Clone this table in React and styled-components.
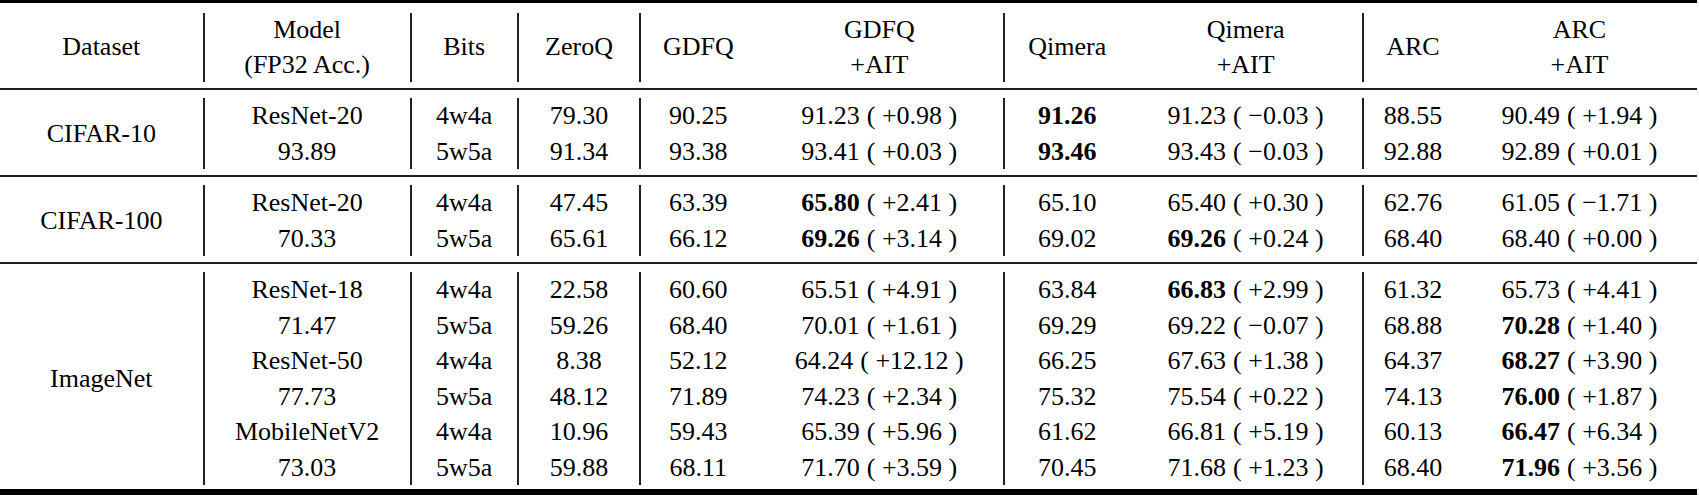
import React from "react";
import styled, { createGlobalStyle } from "styled-components";

const Global = createGlobalStyle`
  html, body { margin: 0; padding: 0; background: #fff; }
  body { font-family: "Liberation Serif", serif; color: #000; }
`;

const COLS = "202.6px 207px 107.2px 122.5px 116px 248px 126px 232.7px 100px 235px";
const LINED = new Set([1, 2, 3, 4, 6, 8]);

const Table = styled.div`
  width: 1697px;
  display: flex;
  flex-direction: column;
  font-family: "Liberation Serif", serif;
  font-size: 26px;
  color: #000;
`;

const TopRule = styled.div`
  height: 3px;
  background: #000;
  margin-bottom: 10px;
`;

const MidRule = styled.div`
  height: 2px;
  background: #1e1e1e;
  margin: 6px 0 8px;
`;

const BottomRule = styled.div`
  height: 6px;
  background: #000;
  margin-top: 4px;
`;

const Section = styled.div`
  display: grid;
  grid-template-columns: ${COLS};
  grid-auto-rows: ${(p) => p.$row}px;
`;

const Cell = styled.div`
  display: flex;
  flex-direction: column;
  align-items: center;
  justify-content: center;
  font-family: "Liberation Serif", serif;
  line-height: ${(p) => p.$lh || 35.5}px;
  white-space: nowrap;
  grid-column: ${(p) => p.$col + 1};
  grid-row: ${(p) => (p.$span ? `1 / span ${p.$span}` : "auto")};
  border-left: ${(p) => (LINED.has(p.$col) ? "2px solid #222" : "none")};
`;

const B = styled.b`
  font-weight: 700;
`;

const Delta = styled.span`
  margin-left: 7px;
`;

const header = [
  ["Dataset"],
  ["Model", "(FP32 Acc.)"],
  ["Bits"],
  ["ZeroQ"],
  ["GDFQ"],
  ["GDFQ", "+AIT"],
  ["Qimera"],
  ["Qimera", "+AIT"],
  ["ARC"],
  ["ARC", "+AIT"],
];

const sections = [
  {
    name: "CIFAR-10",
    rows: [
      ["ResNet-20", "4w4a", "79.30", "90.25", ["91.23", "+0.98"], "*91.26", ["91.23", "\u22120.03"], "88.55", ["90.49", "+1.94"]],
      ["93.89", "5w5a", "91.34", "93.38", ["93.41", "+0.03"], "*93.46", ["93.43", "\u22120.03"], "92.88", ["92.89", "+0.01"]],
    ],
  },
  {
    name: "CIFAR-100",
    rows: [
      ["ResNet-20", "4w4a", "47.45", "63.39", ["*65.80", "+2.41"], "65.10", ["65.40", "+0.30"], "62.76", ["61.05", "\u22121.71"]],
      ["70.33", "5w5a", "65.61", "66.12", ["*69.26", "+3.14"], "69.02", ["*69.26", "+0.24"], "68.40", ["68.40", "+0.00"]],
    ],
  },
  {
    name: "ImageNet",
    rows: [
      ["ResNet-18", "4w4a", "22.58", "60.60", ["65.51", "+4.91"], "63.84", ["*66.83", "+2.99"], "61.32", ["65.73", "+4.41"]],
      ["71.47", "5w5a", "59.26", "68.40", ["70.01", "+1.61"], "69.29", ["69.22", "\u22120.07"], "68.88", ["*70.28", "+1.40"]],
      ["ResNet-50", "4w4a", "8.38", "52.12", ["64.24", "+12.12"], "66.25", ["67.63", "+1.38"], "64.37", ["*68.27", "+3.90"]],
      ["77.73", "5w5a", "48.12", "71.89", ["74.23", "+2.34"], "75.32", ["75.54", "+0.22"], "74.13", ["*76.00", "+1.87"]],
      ["MobileNetV2", "4w4a", "10.96", "59.43", ["65.39", "+5.96"], "61.62", ["66.81", "+5.19"], "60.13", ["*66.47", "+6.34"]],
      ["73.03", "5w5a", "59.88", "68.11", ["71.70", "+3.59"], "70.45", ["71.68", "+1.23"], "68.40", ["*71.96", "+3.56"]],
    ],
  },
];

function Num({ v }) {
  if (v.startsWith("*")) return <B>{v.slice(1)}</B>;
  return <>{v}</>;
}

function Value({ v }) {
  if (Array.isArray(v)) {
    return (
      <span>
        <Num v={v[0]} />
        <Delta>( {v[1]} )</Delta>
      </span>
    );
  }
  return <Num v={v} />;
}

export default function App() {
  return (
    <>
      <Global />
      <Table>
        <TopRule />
        <Section $row={69}>
          {header.map((lines, i) => (
            <Cell key={i} $col={i} $lh={34.5}>
              {lines.map((l) => (
                <span key={l}>{l}</span>
              ))}
            </Cell>
          ))}
        </Section>
        {sections.map((s) => (
          <React.Fragment key={s.name}>
            <MidRule />
            <Section $row={35.5}>
              <Cell $col={0} $span={s.rows.length}>
                {s.name}
              </Cell>
              {s.rows.map((r, ri) =>
                r.map((v, ci) => (
                  <Cell key={`${ri}-${ci}`} $col={ci + 1} style={{ gridRow: ri + 1 }}>
                    <Value v={v} />
                  </Cell>
                ))
              )}
            </Section>
          </React.Fragment>
        ))}
        <BottomRule />
      </Table>
    </>
  );
}
